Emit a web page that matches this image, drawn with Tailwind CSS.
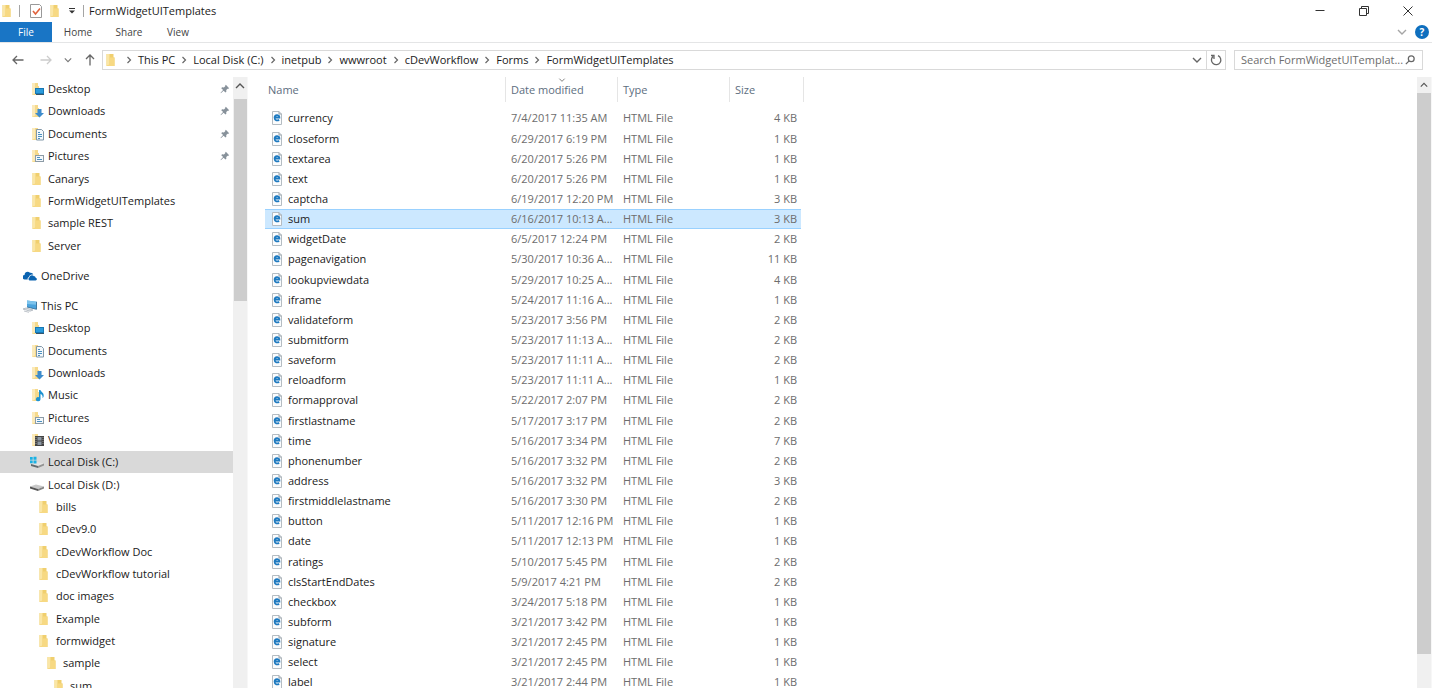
<!DOCTYPE html>
<html lang="en">
<head>
    <meta charset="UTF-8">
    <meta name="viewport" content="width=device-width, initial-scale=1.0">
    <title>FormWidgetUITemplates</title>
    <script src="https://cdn.jsdelivr.net/npm/@tailwindcss/browser@4"></script>
</head>
<body class="h-screen flex flex-col overflow-hidden bg-white text-[#1a1a1a] text-[11px] leading-4 font-['Open_Sans','Noto_Sans',sans-serif]">

    <!-- Icons -->
    <svg class="hidden" xmlns="http://www.w3.org/2000/svg">
        <symbol id="folder" viewBox="0 0 14 14">
            <path d="M2.5 1h7v3.500h1V13h-8z" fill="#f0cf6e" />
            <path d="M2.500 1h3v10.500l-3 1.500z" fill="#fae6a6" />
            <path d="M5.500 4.500h5V13h-8l3-1.500z" fill="#f7d983" />
        </symbol>
        <symbol id="half-folder" viewBox="0 0 14 14">
            <path d="M2 1h6v3h1v9H2z" fill="#f5d98b" />
            <path d="M2 1h3v10.500L2 13z" fill="#fbeaba" />
        </symbol>
        <symbol id="desktop" viewBox="0 0 14 14">
            <use href="#half-folder" />
            <rect x="5.500" y="6.500" width="8" height="5" fill="#2a9bdc" stroke="#1878b4" />
            <path d="M6 12.500h8" stroke="#35566e" />
        </symbol>
        <symbol id="downloads" viewBox="0 0 14 14">
            <use href="#half-folder" />
            <path d="M7.500 5h4v4h2.500l-4.500 4.500L5 9h2.500z" fill="#3d8ccc" />
        </symbol>
        <symbol id="documents" viewBox="0 0 14 14">
            <use href="#half-folder" />
            <path d="M6.500 2.500h5l2 2v8.500h-7z" fill="#f4f8fb" stroke="#8197a8" />
            <path d="M8 5.500h2M8 7.500h4M8 9.500h4M8 11.500h2" stroke="#4a90c0" />
        </symbol>
        <symbol id="pictures" viewBox="0 0 14 14">
            <use href="#half-folder" />
            <rect x="5.500" y="6.500" width="8" height="6" fill="#f4f8fb" stroke="#8c9ba6" />
            <path d="M7 8.500h3M7 10.500h5" stroke="#4a90c0" />
        </symbol>
        <symbol id="music" viewBox="0 0 14 14">
            <use href="#half-folder" />
            <path d="M9 2h1.500c.3 2 3.500 2.500 3.200 6-.1 1-.6 1.600-1.200 2 .5-2.300-.4-3.300-2-4v5.200a2.300 2 0 1 1-1.500-1.900z" fill="#1d93d2" />
        </symbol>
        <symbol id="videos" viewBox="0 0 14 14">
            <use href="#half-folder" />
            <path d="M5 3h9v10H5z" fill="#434343" />
            <path d="M7.500 4h4v3.500h-4zM7.500 8.500h4V12h-4z" fill="#8c98a4" />
            <path d="M6 4v8M13 4v8" stroke="#999" stroke-dasharray="1 1" />
        </symbol>
        <symbol id="drive" viewBox="0 0 14 14">
            <path d="M0 8.500l6-2 8 2-6 2.500z" fill="#c9c9c9" />
            <path d="M0 8.500l8 2.500v2L0 10.500z" fill="#555" />
            <path d="M8 11l6-2.500v2L8 13z" fill="#858585" />
        </symbol>
        <symbol id="drive-c" viewBox="0 0 14 14">
            <path d="M1 9l6-2 7 1.500L8 11z" fill="#e3e3e3" />
            <path d="M1 9l7 2v2l-7-2z" fill="#62696e" />
            <path d="M8 11l6-2.500v2L8 13z" fill="#949494" />
            <path d="M0 2h2.700v2.700H0zM3.500 1.700h3v3h-3zM0 5.500h2.700v2.700H0zM3.500 5.500h3v3h-3z" fill="#19b1e4" />
        </symbol>
        <symbol id="onedrive" viewBox="0 0 14 14">
            <path d="M2 10.500a2.300 2.300 0 0 1-.4-4.600C1.500 3.300 4.800 1.700 7 3.800c1.800-.3 3 .6 3.300 2C8.500 5 6.300 6 6 8c-1.200.3-1.700 1.500-1.200 2.500z" fill="#0a63b0" />
            <path d="M6.600 11.500a1.700 1.700 0 0 1 0-3.200C6.700 6 9.700 5.400 10.900 7.200c1.200 0 1.700.7 1.700 1.500 1.700.2 1.700 2.600 0 2.800z" fill="#0a63b0" />
        </symbol>
        <symbol id="this-pc" viewBox="0 0 14 14">
            <path d="M4 1.500l9.500 1.300v7.500L4 8z" fill="#4aa3dd" />
            <path d="M4 1.500l9.500 1.300v3L4 5z" fill="#7cc3ec" />
            <path d="M13.500 2.800v7.500L4 8" fill="none" stroke="#28638f" stroke-width=".8" />
            <path d="M0 10l3-1 7 2-3 1.200zM1 12l5 1.300" fill="#dfe4e8" stroke="#a2abb3" stroke-width=".7" />
        </symbol>
        <symbol id="pin" viewBox="0 0 12 12">
            <path d="M7 1l4 4-1 .8-.8-.2-1.700 1.700.1 2-1 1-2.300-2.300L1 11l-.3-.4 3-3.400L1.500 5l1-1 2.200.2L6.500 2.500 6.200 1.800z" fill="#87919a" />
        </symbol>
        <symbol id="html" viewBox="0 0 12 14">
            <path d="M1.500.5h6.500l2.500 2.500v10.500h-9z" fill="#fbfcfd" stroke="#b4bcc2" />
            <path d="M8 .5V3h2.500" fill="none" stroke="#98a2aa" />
            <path d="M3.600 6.500h4.800c0-3.300-4.800-3.300-4.800.2 0 3 3 3.200 4.500 2" fill="none" stroke="#1e7ac0" stroke-width="1.800" />
        </symbol>
        <symbol id="chev-right" viewBox="0 0 6 8"><path d="M1.500 1l3 3-3 3" fill="none" stroke="#666" stroke-width="1.200" /></symbol>
        <symbol id="chev-down" viewBox="0 0 10 6"><path d="M1 1l4 4 4-4" fill="none" stroke="currentColor" stroke-width="1.400" /></symbol>
    </svg>

    <!-- Title bar -->
    <header class="h-[22px] shrink-0 flex items-center">
        <svg class="size-3.5"><use href="#folder" /></svg>
        <span class="w-px h-3 ml-[5px] bg-[#a5a5a5]"></span>
        <button class="ml-2.5" aria-label="Properties">
            <svg class="w-3 h-3.5 block" viewBox="0 0 12 14">
                <path d="M.5.5h9l2 2v11H.5z" fill="#fff" stroke="#999" />
                <path d="M3 7l2.500 3L10 4.500" fill="none" stroke="#e0633e" stroke-width="1.600" />
            </svg>
        </button>
        <button class="ml-1.5" aria-label="New folder"><svg class="size-3.5 block"><use href="#folder" /></svg></button>
        <button class="ml-[7px]" aria-label="Customize Quick Access Toolbar">
            <svg class="w-1.5 h-1.5 block" viewBox="0 0 6 6"><path d="M0 .5h6" stroke="#333" /><path d="M0 2.500h6L3 5.500z" fill="#333" /></svg>
        </button>
        <span class="w-px h-3 ml-2 bg-[#a5a5a5]"></span>
        <h1 class="ml-[5px]">FormWidgetUITemplates</h1>
        <div class="ml-auto flex items-center gap-8 pr-[18px] text-[#333]">
            <button aria-label="Minimize"><svg class="w-3 h-3 block" viewBox="0 0 12 12"><path d="M1.500 5.500h9" stroke="currentColor" /></svg></button>
            <button aria-label="Restore"><svg class="w-3 h-3 block" viewBox="0 0 12 12" fill="none" stroke="currentColor"><path d="M1.500 3.500h7v7h-7zM3.500 3.500v-2h7v7h-2" /></svg></button>
            <button aria-label="Close"><svg class="w-3 h-3 block" viewBox="0 0 12 12"><path d="M1.500 1.500l9 9M10.500 1.500l-9 9" stroke="currentColor" /></svg></button>
        </div>
    </header>

    <!-- Ribbon tabs -->
    <nav class="h-[21px] shrink-0 flex items-stretch border-b border-[#e4e5e6] text-[10px] text-[#444]">
        <button class="w-[52px] bg-[#1975c5] text-white">File</button>
        <button class="w-[52px]">Home</button>
        <button class="w-[50px]">Share</button>
        <button class="w-12">View</button>
        <div class="ml-auto flex items-center gap-2 pr-[3px]">
            <button class="text-[#a5a5a5]" aria-label="Expand the Ribbon"><svg class="w-2.5 h-1.5 block"><use href="#chev-down" /></svg></button>
            <button class="size-3.5 rounded-full bg-[#0f6fbe] text-white font-bold leading-3" aria-label="Help">?</button>
        </div>
    </nav>

    <!-- Address bar -->
    <div class="h-[34px] shrink-0 flex items-center pl-3 pr-[9px]">
        <button aria-label="Back"><svg class="size-3 block" viewBox="0 0 12 12" fill="none" stroke="#666" stroke-width="1.300"><path d="M11.500 6H1M5 2L1 6l4 4" /></svg></button>
        <button class="ml-4" aria-label="Forward"><svg class="size-3 block" viewBox="0 0 12 12" fill="none" stroke="#ccc" stroke-width="1.300"><path d="M.5 6H11M7 2l4 4-4 4" /></svg></button>
        <button class="ml-3 text-[#777]" aria-label="Recent locations"><svg class="w-2 h-1.5 block"><use href="#chev-down" /></svg></button>
        <button class="ml-3" aria-label="Up"><svg class="size-3 block" viewBox="0 0 12 12" fill="none" stroke="#666" stroke-width="1.300"><path d="M6 11.500V1M2 5l4-4 4 4" /></svg></button>
        <div class="ml-1.5 flex-1 h-5 flex items-center border border-[#d9d9d9]">
            <svg class="size-3.5 ml-px"><use href="#folder" /></svg>
            <div id="path" class="flex items-center ml-2"></div>
            <button class="ml-auto mr-1 text-[#666]" aria-label="Previous locations"><svg class="w-2.5 h-1.5 block"><use href="#chev-down" /></svg></button>
            <button class="h-full px-0.5 border-l border-[#d9d9d9]" aria-label="Refresh">
                <svg class="size-3.5 block" viewBox="0 0 14 14" fill="none" stroke="#666" stroke-width="1.300"><path d="M9 2.700A4.700 4.700 0 1 1 4 3.500M2 2.500h3V6" /></svg>
            </button>
        </div>
        <label class="ml-2 w-[189px] h-5 flex items-center border border-[#d9d9d9] pl-1.5 pr-[7px]">
            <input type="text" aria-label="Search" placeholder="Search FormWidgetUITemplat..." class="flex-1 min-w-0 outline-none placeholder:text-[#6d6d6d]">
            <svg class="size-2.5" viewBox="0 0 12 12" fill="none" stroke="#666" stroke-width="1.500"><circle cx="7.500" cy="4.500" r="3.500" /><path d="M5 7L1 11" /></svg>
        </label>
    </div>

    <div class="flex-1 min-h-0 flex">
        <!-- Navigation pane -->
        <nav class="w-[233px] shrink-0 overflow-hidden pt-px text-[#1a1a1a]">
            <ul id="quick" class="[&>li]:h-[22px] [&>li:nth-child(5n+3)]:h-[23px] [&>li:nth-child(5n)]:h-[23px]"></ul>
            <ul id="onedriveList" class="mt-2 [&>li]:h-[22px]"></ul>
            <ul id="pc" class="mt-2 [&>li]:h-[22px] [&>li:nth-child(3n)]:h-[23px]"></ul>
        </nav>
        <div class="w-[15px] shrink-0 bg-[#f0f0f0] border-r border-[#f7f7f7] flex flex-col">
            <button class="h-[22px] pb-1 flex items-center justify-center text-[#555]" aria-label="Scroll up"><svg class="w-2.5 h-1.5 rotate-180"><use href="#chev-down" /></svg></button>
            <div class="h-[202px] ml-px bg-[#cdcdcd]"></div>
        </div>

        <!-- File list -->
        <main class="flex-1 min-w-0 overflow-hidden pl-[17px]">
            <table class="w-[536px] table-fixed border-separate border-spacing-0">
                <thead class="text-[#5d6e80]">
                    <tr class="h-[31px] text-left align-top">
                        <th class="w-[241px] p-0 font-normal"><div class="h-[25px] pl-[3px] pt-[5px] border-r border-[#e5e5e5]">Name</div></th>
                        <th class="w-[112px] p-0 font-normal">
                            <div class="relative h-[25px] pl-[5px] pt-[5px] border-r border-[#e5e5e5]">
                                Date modified
                                <svg class="absolute top-px left-[52px] w-2 h-1 text-[#777]"><use href="#chev-down" /></svg>
                            </div>
                        </th>
                        <th class="w-[112px] p-0 font-normal"><div class="h-[25px] pl-[5px] pt-[5px] border-r border-[#e5e5e5]">Type</div></th>
                        <th class="p-0 font-normal"><div class="h-[25px] pl-[5px] pt-[5px] -mr-[3px] border-r border-[#e5e5e5]">Size</div></th>
                    </tr>
                </thead>
                <tbody id="files" class="text-[#6d6d6d] [&>tr]:h-5 [&>tr:nth-child(7n+2)]:h-[21px]"></tbody>
            </table>
        </main>
        <div class="w-[15px] shrink-0 bg-[#f0f0f0] border-r border-[#f7f7f7] flex flex-col">
            <button class="h-4 flex items-center justify-center text-[#555]" aria-label="Scroll up"><svg class="w-2 h-1.5 rotate-180"><use href="#chev-down" /></svg></button>
            <div class="h-[561px] bg-[#cdcdcd]"></div>
        </div>
    </div>

    <script>
        const path = ['This PC', 'Local Disk (C:)', 'inetpub', 'wwwroot', 'cDevWorkflow', 'Forms', 'FormWidgetUITemplates'];

        // level, icon, label, pinned
        const quick = [
            [1, 'desktop', 'Desktop', true],
            [1, 'downloads', 'Downloads', true],
            [1, 'documents', 'Documents', true],
            [1, 'pictures', 'Pictures', true],
            [1, 'folder', 'Canarys'],
            [1, 'folder', 'FormWidgetUITemplates'],
            [1, 'folder', 'sample REST'],
            [1, 'folder', 'Server']
        ];
        const pc = [
            [0, 'this-pc', 'This PC'],
            [1, 'desktop', 'Desktop'],
            [1, 'documents', 'Documents'],
            [1, 'downloads', 'Downloads'],
            [1, 'music', 'Music'],
            [1, 'pictures', 'Pictures'],
            [1, 'videos', 'Videos'],
            [1, 'drive-c', 'Local Disk (C:)'],
            [1, 'drive', 'Local Disk (D:)'],
            [2, 'folder', 'bills'],
            [2, 'folder', 'cDev9.0'],
            [2, 'folder', 'cDevWorkflow Doc'],
            [2, 'folder', 'cDevWorkflow tutorial'],
            [2, 'folder', 'doc images'],
            [2, 'folder', 'Example'],
            [2, 'folder', 'formwidget'],
            [3, 'folder', 'sample'],
            [4, 'folder', 'sum']
        ];
        const files = [
            ['currency', '7/4/2017 11:35 AM', 4],
            ['closeform', '6/29/2017 6:19 PM', 1],
            ['textarea', '6/20/2017 5:26 PM', 1],
            ['text', '6/20/2017 5:26 PM', 1],
            ['captcha', '6/19/2017 12:20 PM', 3],
            ['sum', '6/16/2017 10:13 A...', 3],
            ['widgetDate', '6/5/2017 12:24 PM', 2],
            ['pagenavigation', '5/30/2017 10:36 A...', 11],
            ['lookupviewdata', '5/29/2017 10:25 A...', 4],
            ['iframe', '5/24/2017 11:16 A...', 1],
            ['validateform', '5/23/2017 3:56 PM', 2],
            ['submitform', '5/23/2017 11:13 A...', 2],
            ['saveform', '5/23/2017 11:11 A...', 2],
            ['reloadform', '5/23/2017 11:11 A...', 1],
            ['formapproval', '5/22/2017 2:07 PM', 2],
            ['firstlastname', '5/17/2017 3:17 PM', 2],
            ['time', '5/16/2017 3:34 PM', 7],
            ['phonenumber', '5/16/2017 3:32 PM', 2],
            ['address', '5/16/2017 3:32 PM', 3],
            ['firstmiddlelastname', '5/16/2017 3:30 PM', 2],
            ['button', '5/11/2017 12:16 PM', 1],
            ['date', '5/11/2017 12:13 PM', 1],
            ['ratings', '5/10/2017 5:45 PM', 2],
            ['clsStartEndDates', '5/9/2017 4:21 PM', 2],
            ['checkbox', '3/24/2017 5:18 PM', 1],
            ['subform', '3/21/2017 3:42 PM', 1],
            ['signature', '3/21/2017 2:45 PM', 1],
            ['select', '3/21/2017 2:45 PM', 1],
            ['label', '3/21/2017 2:44 PM', 1]
        ];

        const indent = ['pl-[23px] gap-1', 'pl-[30px] gap-1', 'pl-[37px] gap-[5px]', 'pl-[45px] gap-1', 'pl-[52px] gap-1'];

        function treeItem([level, icon, label, pinned]) {
            const active = icon === 'drive-c' ? 'bg-[#d9d9d9]' : '';
            return `<li><a href="#" class="h-full flex items-center pr-[3px] ${indent[level]} ${active}">
                <svg class="size-3.5 shrink-0"><use href="#${icon}" /></svg>
                <span>${label}</span>
                ${pinned ? '<svg class="size-2.5 ml-auto"><use href="#pin" /></svg>' : ''}
            </a></li>`;
        }

        function fileRow([name, date, size]) {
            const cell = name === 'sum' ? 'bg-[#cce8ff] border-y border-[#99d1ff]' : '';
            return `<tr>
                <td class="p-0 pl-1.5 ${cell}"><a href="#" class="flex items-center gap-[5px] text-[#1a1a1a]">
                    <svg class="w-3 h-3.5"><use href="#html" /></svg>${name}</a></td>
                <td class="p-0 pl-[5px] whitespace-nowrap ${cell}">${date}</td>
                <td class="p-0 pl-[5px] ${cell}">HTML File</td>
                <td class="p-0 pr-1 text-right ${cell}">${size} KB</td>
            </tr>`;
        }

        document.getElementById('path').innerHTML = path.map(p => `
            <svg class="w-1.5 h-2 mr-1.5"><use href="#chev-right" /></svg>
            <button class="mr-1.5">${p}</button>`).join('');
        document.getElementById('quick').innerHTML = quick.map(treeItem).join('');
        document.getElementById('onedriveList').innerHTML = treeItem([0, 'onedrive', 'OneDrive']);
        document.getElementById('pc').innerHTML = pc.map(treeItem).join('');
        document.getElementById('files').innerHTML = files.map(fileRow).join('');
    </script>
</body>
</html>
